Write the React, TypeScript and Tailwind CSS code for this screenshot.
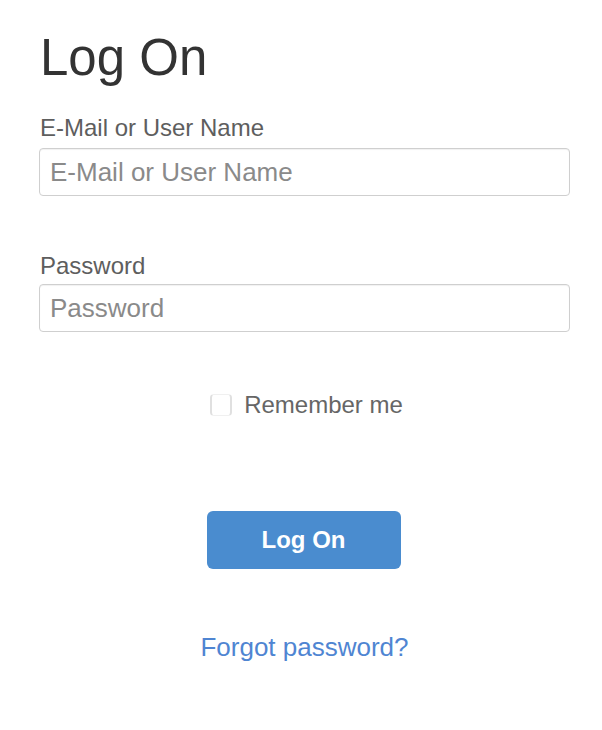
import React from "react";

export default function App() {
  return (
    <div
      className="min-h-[730px] w-[602px] bg-white pl-[39px] pr-[32px] pt-[30px]"
      style={{ fontFamily: '"Liberation Sans", Arial, sans-serif' }}
    >
      <h1 className="m-0 pl-[1px] text-[51px] leading-[56px] font-normal text-[#333]">Log On</h1>

      <label className="mt-[28px] block pl-[1px] text-[24px] leading-[28px] text-[#5e5e5e]">
        E-Mail or User Name
      </label>
      <input
        type="text"
        placeholder="E-Mail or User Name"
        className="mt-[6px] block h-[48px] w-full rounded-[4px] border border-[#cfcfcf] bg-white px-[10px] text-[26px] text-[#333] shadow-[inset_0_1px_1px_rgba(0,0,0,0.06)] outline-none placeholder:text-[#8a8a8a]"
        style={{ fontFamily: '"Liberation Sans", Arial, sans-serif' }}
      />

      <label className="mt-[56px] block pl-[1px] text-[24px] leading-[28px] text-[#5e5e5e]">
        Password
      </label>
      <input
        type="password"
        placeholder="Password"
        className="mt-[4px] block h-[48px] w-full rounded-[4px] border border-[#cfcfcf] bg-white px-[10px] text-[26px] text-[#333] shadow-[inset_0_1px_1px_rgba(0,0,0,0.06)] outline-none placeholder:text-[#8a8a8a]"
        style={{ fontFamily: '"Liberation Sans", Arial, sans-serif' }}
      />

      <div className="mt-[59px] flex h-[28px] items-center justify-center gap-[12px] pl-[4px]">
        <span className="block h-[22px] w-[22px] rounded-[4px] border-x-2 border-y border-x-[#e0e0e0] border-y-[#f0f0f0] bg-white" />
        <span className="text-[24px] leading-[28px] text-[#666]">Remember me</span>
      </div>

      <div className="mt-[92px] flex justify-center">
        <button
          type="button"
          className="ml-[-2px] h-[58px] w-[194px] rounded-[6px] bg-[#4a8ccf] text-[24px] font-bold text-white"
          style={{ fontFamily: '"Liberation Sans", Arial, sans-serif' }}
        >
          Log On
        </button>
      </div>

      <div className="mt-[63px] flex justify-center">
        <a className="text-[26px] leading-[30px] text-[#4f85d2] no-underline" href="#">
          Forgot password?
        </a>
      </div>
    </div>
  );
}
